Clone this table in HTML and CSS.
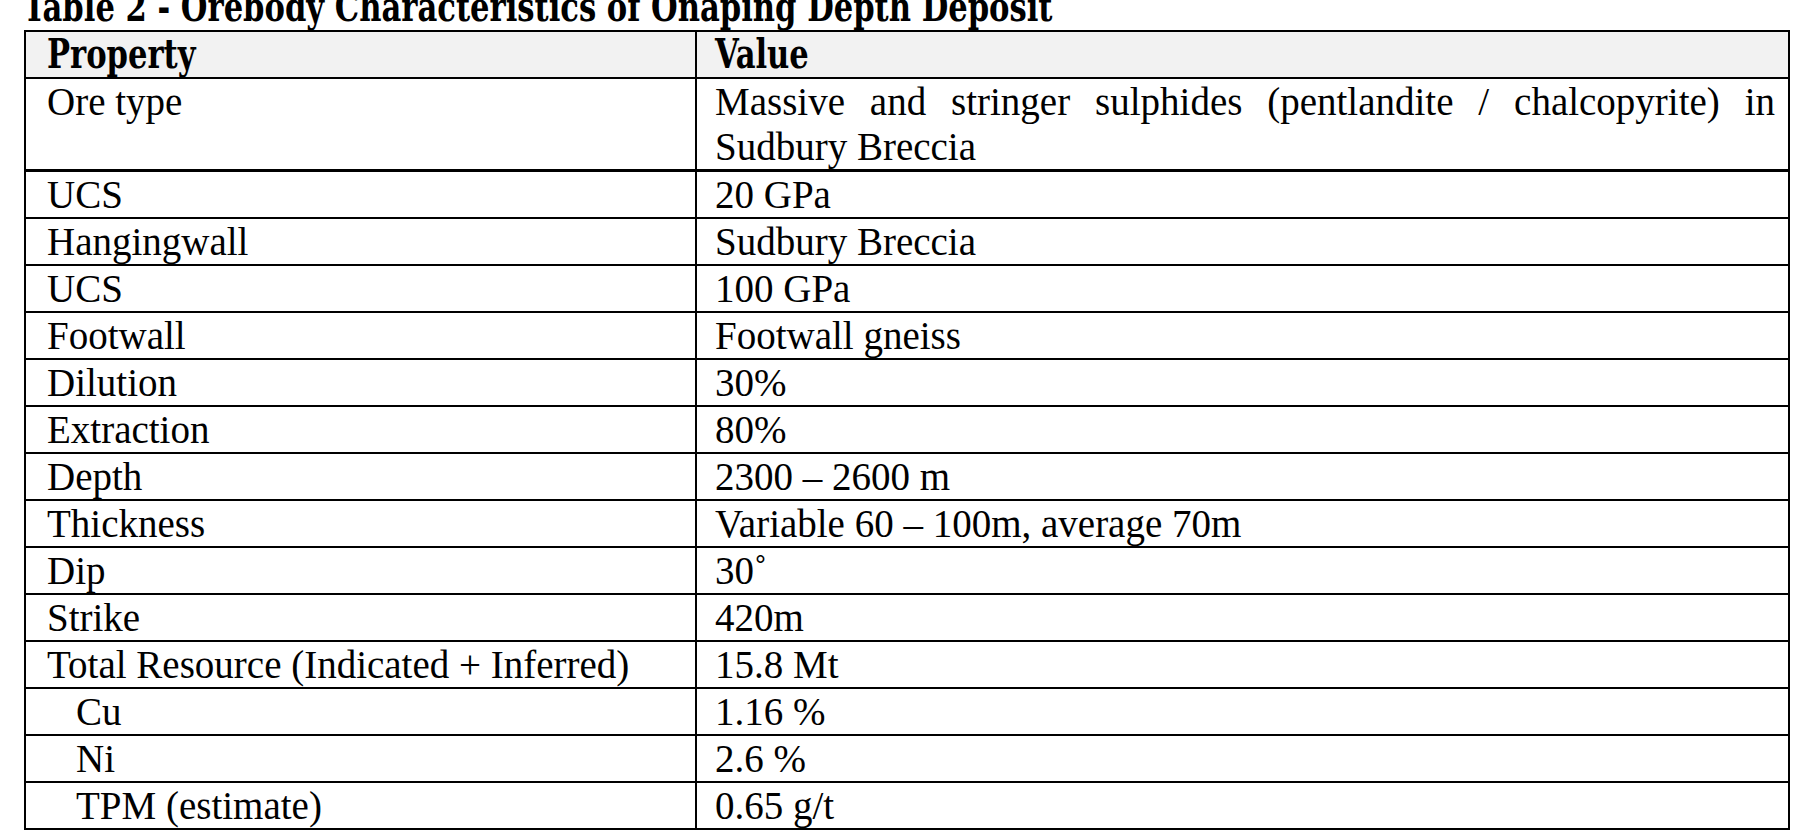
FILE: index.html
```html
<!DOCTYPE html>
<html>
<head>
<meta charset="utf-8">
<link rel="stylesheet" href="styles.css">
</head>
<body>
<div class="page">
  <h1 class="title"><span class="cond">Table 2 - Orebody Characteristics of Onaping Depth Deposit</span></h1>
  <table class="props">
    <colgroup><col class="c1"><col class="c2"></colgroup>
    <thead>
      <tr><th><span class="cond">Property</span></th><th class="val"><span class="cond">Value</span></th></tr>
    </thead>
    <tbody>
      <tr class="tall"><td>Ore type</td><td class="val just">Massive and stringer sulphides (pentlandite / chalcopyrite) in Sudbury Breccia</td></tr>
      <tr><td>UCS</td><td class="val">20 GPa</td></tr>
      <tr><td>Hangingwall</td><td class="val">Sudbury Breccia</td></tr>
      <tr><td>UCS</td><td class="val">100 GPa</td></tr>
      <tr><td>Footwall</td><td class="val">Footwall gneiss</td></tr>
      <tr><td>Dilution</td><td class="val">30%</td></tr>
      <tr><td>Extraction</td><td class="val">80%</td></tr>
      <tr><td>Depth</td><td class="val">2300 – 2600 m</td></tr>
      <tr><td>Thickness</td><td class="val">Variable 60 – 100m, average 70m</td></tr>
      <tr><td>Dip</td><td class="val">30˚</td></tr>
      <tr><td>Strike</td><td class="val">420m</td></tr>
      <tr><td>Total Resource (Indicated + Inferred)</td><td class="val">15.8 Mt</td></tr>
      <tr><td class="ind">Cu</td><td class="val">1.16 %</td></tr>
      <tr><td class="ind">Ni</td><td class="val">2.6 %</td></tr>
      <tr><td class="ind">TPM (estimate)</td><td class="val">0.65 g/t</td></tr>
    </tbody>
  </table>
</div>
</body>
</html>
```

FILE: styles.css
```css
html, body {
  margin: 0;
  padding: 0;
  background: #ffffff;
  overflow: hidden;
}

.page {
  padding-left: 24px;
  width: 1766px;
}

.title {
  margin: -13px 0 3px -1px;
  font-family: "DejaVu Serif Condensed", "DejaVu Serif", serif;
  font-weight: bold;
  font-size: 41px;
  line-height: 40px;
  color: #000;
  white-space: nowrap;
}

.cond {
  display: inline-block;
  transform: scaleX(0.83);
  transform-origin: 0 50%;
  white-space: nowrap;
}

.props {
  width: 1766px;
  border-collapse: collapse;
  font-family: "Liberation Serif", "Times New Roman", serif;
  font-size: 39px;
  line-height: 45px;
  color: #000;
  table-layout: fixed;
}

.c1 { width: 671px; }

.props th,
.props td {
  border: 2px solid #000;
  padding: 0 13px 0 21px;
  text-align: left;
  vertical-align: top;
  white-space: nowrap;
}

.props th {
  background: #f2f2f2;
  font-family: "DejaVu Serif Condensed", "DejaVu Serif", serif;
  font-weight: bold;
  font-size: 41px;
}

.props .val {
  padding-left: 18px;
}

.props .tall td {
  border-bottom-width: 3px;
}

.props td.just {
  white-space: normal;
  text-align: justify;
}

.props td.ind {
  padding-left: 50px;
}
```
